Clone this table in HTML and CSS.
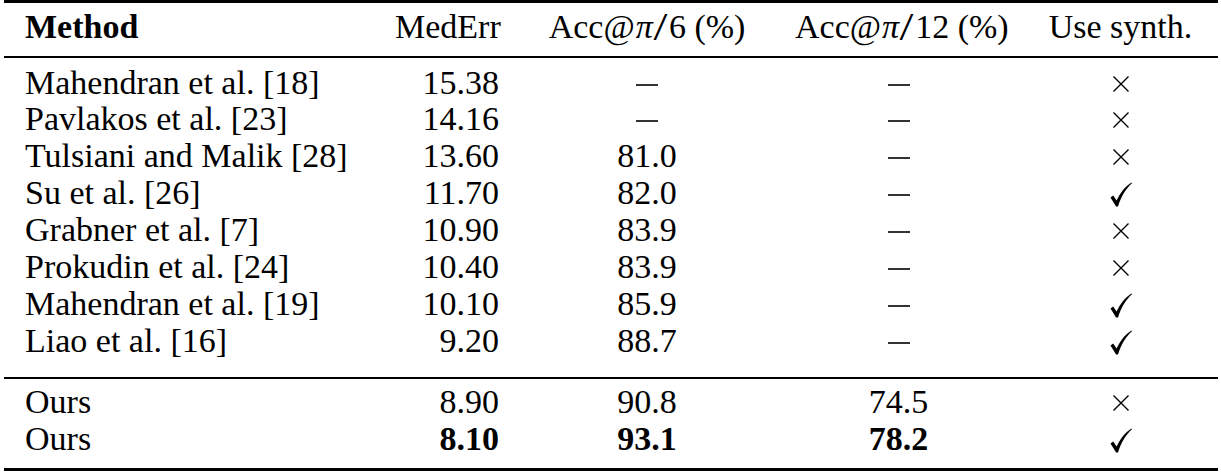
FILE: index.html
```html
<!DOCTYPE html>
<html lang="en">
<head>
  <meta charset="UTF-8" />
  <title>Viewpoint results</title>
  <link rel="stylesheet" href="styles.css">
</head>
<body>
  <table class="results">
    <colgroup>
      <col class="c-method">
      <col class="c-err">
      <col class="c-acc6">
      <col class="c-acc12">
      <col class="c-synth">
    </colgroup>
    <thead>
      <tr>
        <th class="left"><b>Method</b></th>
        <th class="right">MedErr</th>
        <th>Acc@<i>π</i><span class="slash">/</span>6 (%)</th>
        <th>Acc@<i>π</i><span class="slash">/</span>12 (%)</th>
        <th>Use synth.</th>
      </tr>
    </thead>
    <tbody class="others">
      <tr><td>Mahendran et al. [18]</td><td class="num">15.38</td><td><span class="dash"></span></td><td><span class="dash"></span></td><td><svg class="cross" viewBox="0 0 18 18"><path d="M1.5 1.5 L16.5 16.5 M16.5 1.5 L1.5 16.5"/></svg></td></tr>
      <tr><td>Pavlakos et al. [23]</td><td class="num">14.16</td><td><span class="dash"></span></td><td><span class="dash"></span></td><td><svg class="cross" viewBox="0 0 18 18"><path d="M1.5 1.5 L16.5 16.5 M16.5 1.5 L1.5 16.5"/></svg></td></tr>
      <tr><td>Tulsiani and Malik [28]</td><td class="num">13.60</td><td>81.0</td><td><span class="dash"></span></td><td><svg class="cross" viewBox="0 0 18 18"><path d="M1.5 1.5 L16.5 16.5 M16.5 1.5 L1.5 16.5"/></svg></td></tr>
      <tr><td>Su et al. [26]</td><td class="num">11.70</td><td>82.0</td><td><span class="dash"></span></td><td><svg class="check" viewBox="0 0 22 25"><path d="M0.5 15.6 L3.2 13.4 L6.6 18.6 C10 11 15 4.5 21.4 0.4 L22 1.2 C16 6.5 11.2 14 8 24.6 L6.1 24.6 Z"/></svg></td></tr>
      <tr><td>Grabner et al. [7]</td><td class="num">10.90</td><td>83.9</td><td><span class="dash"></span></td><td><svg class="cross" viewBox="0 0 18 18"><path d="M1.5 1.5 L16.5 16.5 M16.5 1.5 L1.5 16.5"/></svg></td></tr>
      <tr><td>Prokudin et al. [24]</td><td class="num">10.40</td><td>83.9</td><td><span class="dash"></span></td><td><svg class="cross" viewBox="0 0 18 18"><path d="M1.5 1.5 L16.5 16.5 M16.5 1.5 L1.5 16.5"/></svg></td></tr>
      <tr><td>Mahendran et al. [19]</td><td class="num">10.10</td><td>85.9</td><td><span class="dash"></span></td><td><svg class="check" viewBox="0 0 22 25"><path d="M0.5 15.6 L3.2 13.4 L6.6 18.6 C10 11 15 4.5 21.4 0.4 L22 1.2 C16 6.5 11.2 14 8 24.6 L6.1 24.6 Z"/></svg></td></tr>
      <tr><td>Liao et al. [16]</td><td class="num">9.20</td><td>88.7</td><td><span class="dash"></span></td><td><svg class="check" viewBox="0 0 22 25"><path d="M0.5 15.6 L3.2 13.4 L6.6 18.6 C10 11 15 4.5 21.4 0.4 L22 1.2 C16 6.5 11.2 14 8 24.6 L6.1 24.6 Z"/></svg></td></tr>
    </tbody>
    <tbody class="ours">
      <tr><td>Ours</td><td class="num">8.90</td><td>90.8</td><td>74.5</td><td><svg class="cross" viewBox="0 0 18 18"><path d="M1.5 1.5 L16.5 16.5 M16.5 1.5 L1.5 16.5"/></svg></td></tr>
      <tr><td>Ours</td><td class="num"><b>8.10</b></td><td><b>93.1</b></td><td><b>78.2</b></td><td><svg class="check" viewBox="0 0 22 25"><path d="M0.5 15.6 L3.2 13.4 L6.6 18.6 C10 11 15 4.5 21.4 0.4 L22 1.2 C16 6.5 11.2 14 8 24.6 L6.1 24.6 Z"/></svg></td></tr>
    </tbody>
  </table>
</body>
</html>
```

FILE: styles.css
```css
body {
  margin: 0;
  background: #ffffff;
  color: #000;
  font-family: "Liberation Serif", "Times New Roman", serif;
}

.results {
  border-collapse: collapse;
  table-layout: fixed;
  width: 1214px;
  margin-left: 4px;
  font-size: 34px;
  line-height: 36.9px;
}

.c-method { width: 370px; }
.c-err { width: 146px; }
.c-acc6 { width: 254px; }
.c-acc12 { width: 249px; }
.c-synth { width: 195px; }

th, td {
  padding: 0 21px;
  font-weight: normal;
  text-align: center;
  white-space: nowrap;
}

th.left, td:first-child {
  text-align: left;
}

th.right, td.num {
  text-align: right;
}

thead th {
  border-top: 3px solid #000;
  border-bottom: 2px solid #000;
  padding-top: 6px;
  padding-bottom: 10px;
}

thead i {
  font-style: italic;
  padding-left: 1px;
}

.slash {
  display: inline-block;
  font-size: 40px;
  line-height: 0;
  transform: scaleX(1.25);
  margin: 0 3px 0 2px;
  vertical-align: -2px;
}

.others tr:first-child td {
  padding-top: 6.6px;
}

.others tr:last-child td {
  padding-bottom: 17.5px;
}

.ours tr:first-child td {
  border-top: 2px solid #000;
  padding-top: 4.8px;
}

.ours tr:last-child td {
  border-bottom: 3px solid #000;
  padding-bottom: 10px;
}

.dash {
  display: inline-block;
  width: 22px;
  height: 2px;
  background: #333;
  vertical-align: 8px;
}

.cross {
  width: 18px;
  height: 18px;
  vertical-align: 1px;
  stroke: #000;
  stroke-width: 1.4;
  fill: none;
}

.check {
  width: 22px;
  height: 25px;
  vertical-align: -3px;
}
```
